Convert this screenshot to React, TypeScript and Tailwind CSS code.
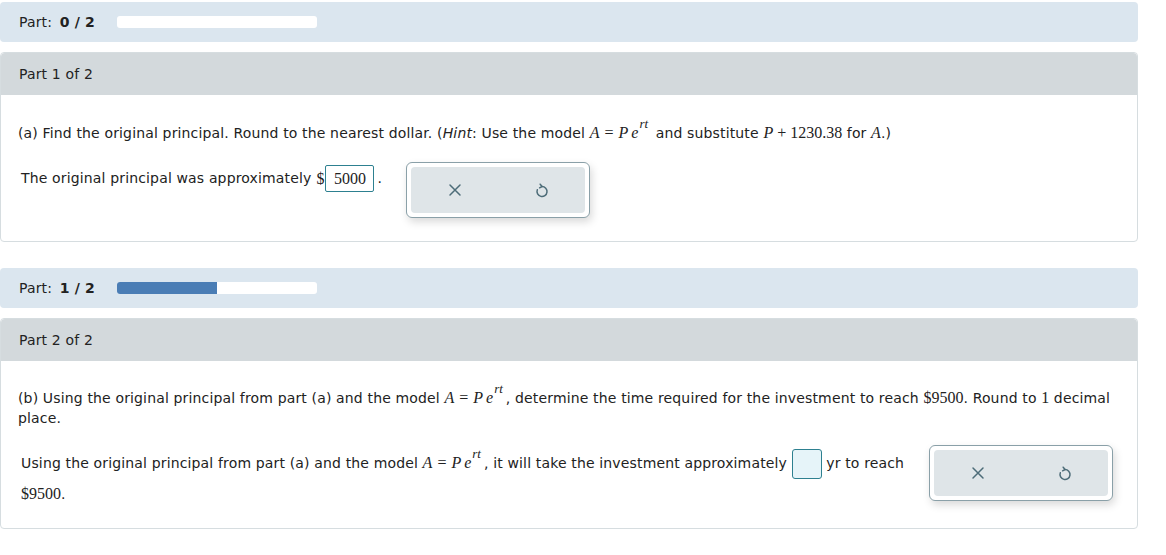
const sans = "font-['DejaVu_Sans',Verdana,sans-serif] tracking-[0.15px]";
const serif = "font-['Liberation_Serif','Times_New_Roman',serif] tracking-normal";

const Pert = () => (
  <span className={`${serif} text-[16px] whitespace-nowrap`}>
    <i>A</i>
    <span className="mx-[5px]">=</span>
    <i>P</i>
    <i className="ml-[3px]">e</i>
    <i className="relative -top-[10px] ml-[1px] mr-[3px] text-[13px] leading-none">rt</i>
  </span>
);

const XIcon = () => (
  <svg width="14" height="14" viewBox="0 0 14 14" fill="none" stroke="#4d6c78" strokeWidth="1.5" strokeLinecap="round">
    <path d="M2 2L12 12M12 2L2 12" />
  </svg>
);

const UndoIcon = () => (
  <svg width="16" height="16" viewBox="0 0 16 16" fill="none" stroke="#4d6c78" strokeWidth="1.5" strokeLinecap="round" strokeLinejoin="round">
    <path d="M8 4.5A5 5 0 1 1 3.3 7.8" />
    <path d="M6.2 2.2L8 4.5L5.6 5.8" />
  </svg>
);

const ButtonBox = ({ className = "" }: { className?: string }) => (
  <div className={`w-[184px] h-[56px] shrink-0 rounded-[6px] border border-[#8aa0a8] bg-white p-[4px] shadow-[2px_4px_8px_rgba(0,0,0,0.15)] ${className}`}>
    <div className="flex h-full rounded-[4px] bg-[#dfe5e8]">
      <button className="flex flex-1 items-center justify-center">
        <XIcon />
      </button>
      <button className="flex flex-1 items-center justify-center">
        <UndoIcon />
      </button>
    </div>
  </div>
);

const PartBar = ({ done }: { done: number }) => (
  <div className="flex h-[40px] w-[1138px] items-center rounded-[4px] bg-[#dbe6ef] pl-[19px]">
    <span className="text-[14px] text-[#222]">
      Part: <b className="ml-[3px]">{done} / 2</b>
    </span>
    <div className="ml-[22px] h-[12px] w-[200px] overflow-hidden rounded-[3px] bg-white">
      <div className="h-full bg-[#4a7db5]" style={{ width: `${(done / 2) * 100}%` }} />
    </div>
  </div>
);

const CardHeader = ({ title }: { title: string }) => (
  <div className="flex h-[42px] items-center rounded-t-[4px] bg-[#d3d9dc] pl-[18px] text-[14px] text-[#222]">
    {title}
  </div>
);

export default function App() {
  return (
    <div className={`${sans} bg-white pt-[2px] text-[14px] text-[#222] min-h-[555px]`}>
      <PartBar done={0} />

      <div className="mt-[10px] w-[1138px] rounded-[4px] border border-[#d6dde0]">
        <CardHeader title="Part 1 of 2" />
        <div className="pl-[17px] pb-[23px] pt-[28px]">
          <p className="leading-[20px]">
            (a) Find the original principal. Round to the nearest dollar. (<i>Hint</i>: Use the model <Pert /> and substitute{" "}
            <span className={`${serif} text-[16px]`}>
              <i>P</i>
              <span className="mx-[4px]">+</span>1230.38
            </span>{" "}
            for <i className={`${serif} text-[16px]`}>A</i>.)
          </p>
          <div className="mt-[19px] flex items-start pl-[3px]">
            <div className="flex items-center pt-[3px]">
              <span>The original principal was approximately</span>
              <span className={`${serif} ml-[5px] text-[16px]`}>$</span>
              <span className={`${serif} ml-[1px] flex h-[27px] w-[49px] items-center justify-center rounded-[2px] border border-[#2d8090] text-[16px]`}>
                5000
              </span>
              <span className="ml-[3px]">.</span>
            </div>
            <ButtonBox className="ml-[24px]" />
          </div>
        </div>
      </div>

      <div className="mt-[26px]">
        <PartBar done={1} />
      </div>

      <div className="mt-[10px] w-[1138px] rounded-[4px] border border-[#d6dde0]">
        <CardHeader title="Part 2 of 2" />
        <div className="pl-[17px] pr-[20px] pb-[19px] pt-[27px]">
          <p className="leading-[20px]">
            (b) Using the original principal from part (a) and the model <Pert />, determine the time required for the investment to reach{" "}
            <span className={`${serif} text-[16px]`}>$9500</span>. Round to <span className={`${serif} text-[16px]`}>1</span> decimal place.
          </p>
          <div className="mt-[20px] flex items-start pl-[3px]">
            <div className="w-[888px] leading-[29px]">
              Using the original principal from part (a) and the model <Pert />, it will take the investment approximately{" "}
              <span className="inline-block h-[30px] w-[30px] rounded-[3px] border border-[#2d8090] bg-[#e6f4f9] align-middle" />{" "}
              yr to reach <span className={`${serif} text-[16px]`}>$9500</span>.
            </div>
            <ButtonBox className="ml-[20px] -mt-[3px]" />
          </div>
        </div>
      </div>
    </div>
  );
}
